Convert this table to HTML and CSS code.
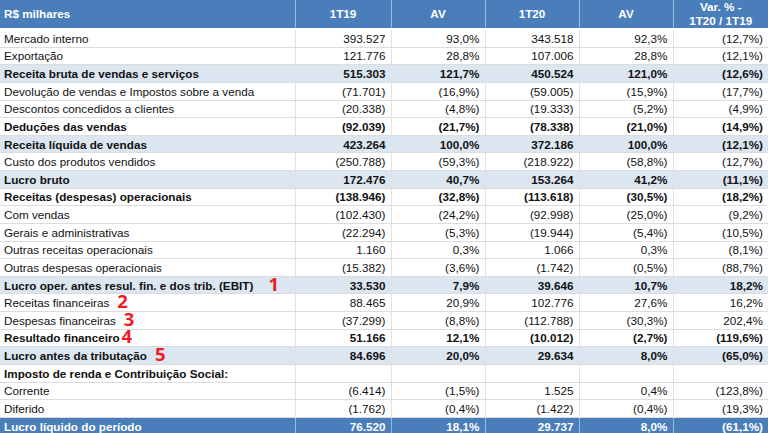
FILE: index.html
```html
<!DOCTYPE html>
<html lang="pt-BR">
<head>
<meta charset="utf-8">
<title>DRE</title>
<link rel="stylesheet" href="styles.css">
</head>
<body>
<table class="dre">
  <colgroup>
    <col class="c-label"><col class="c-n1"><col class="c-n"><col class="c-n"><col class="c-n"><col class="c-n5">
  </colgroup>
  <thead>
    <tr class="head">
      <th class="lbl">R$ milhares</th>
      <th>1T19</th>
      <th>AV</th>
      <th>1T20</th>
      <th>AV</th>
      <th>Var. % -<br>1T20 / 1T19</th>
    </tr>
  </thead>
  <tbody>
    <tr><td>Mercado interno</td><td>393.527</td><td>93,0%</td><td>343.518</td><td>92,3%</td><td>(12,7%)</td></tr>
    <tr><td>Exportação</td><td>121.776</td><td>28,8%</td><td>107.006</td><td>28,8%</td><td>(12,1%)</td></tr>
    <tr class="bold hl"><td>Receita bruta de vendas e serviços</td><td>515.303</td><td>121,7%</td><td>450.524</td><td>121,0%</td><td>(12,6%)</td></tr>
    <tr><td>Devolução de vendas e Impostos sobre a venda</td><td>(71.701)</td><td>(16,9%)</td><td>(59.005)</td><td>(15,9%)</td><td>(17,7%)</td></tr>
    <tr><td>Descontos concedidos a clientes</td><td>(20.338)</td><td>(4,8%)</td><td>(19.333)</td><td>(5,2%)</td><td>(4,9%)</td></tr>
    <tr class="bold"><td>Deduções das vendas</td><td>(92.039)</td><td>(21,7%)</td><td>(78.338)</td><td>(21,0%)</td><td>(14,9%)</td></tr>
    <tr class="bold hl"><td>Receita líquida de vendas</td><td>423.264</td><td>100,0%</td><td>372.186</td><td>100,0%</td><td>(12,1%)</td></tr>
    <tr><td>Custo dos produtos vendidos</td><td>(250.788)</td><td>(59,3%)</td><td>(218.922)</td><td>(58,8%)</td><td>(12,7%)</td></tr>
    <tr class="bold hl"><td>Lucro bruto</td><td>172.476</td><td>40,7%</td><td>153.264</td><td>41,2%</td><td>(11,1%)</td></tr>
    <tr class="bold"><td>Receitas (despesas) operacionais</td><td>(138.946)</td><td>(32,8%)</td><td>(113.618)</td><td>(30,5%)</td><td>(18,2%)</td></tr>
    <tr><td>Com vendas</td><td>(102.430)</td><td>(24,2%)</td><td>(92.998)</td><td>(25,0%)</td><td>(9,2%)</td></tr>
    <tr><td>Gerais e administrativas</td><td>(22.294)</td><td>(5,3%)</td><td>(19.944)</td><td>(5,4%)</td><td>(10,5%)</td></tr>
    <tr><td>Outras receitas operacionais</td><td>1.160</td><td>0,3%</td><td>1.066</td><td>0,3%</td><td>(8,1%)</td></tr>
    <tr><td>Outras despesas operacionais</td><td>(15.382)</td><td>(3,6%)</td><td>(1.742)</td><td>(0,5%)</td><td>(88,7%)</td></tr>
    <tr class="bold hl"><td>Lucro oper. antes resul. fin. e dos trib. (EBIT)<span class="mark m1">1</span></td><td>33.530</td><td>7,9%</td><td>39.646</td><td>10,7%</td><td>18,2%</td></tr>
    <tr><td>Receitas financeiras<span class="mark m2">2</span></td><td>88.465</td><td>20,9%</td><td>102.776</td><td>27,6%</td><td>16,2%</td></tr>
    <tr><td>Despesas financeiras<span class="mark m3">3</span></td><td>(37.299)</td><td>(8,8%)</td><td>(112.788)</td><td>(30,3%)</td><td>202,4%</td></tr>
    <tr class="bold"><td>Resultado financeiro<span class="mark m4">4</span></td><td>51.166</td><td>12,1%</td><td>(10.012)</td><td>(2,7%)</td><td>(119,6%)</td></tr>
    <tr class="bold hl"><td>Lucro antes da tributação<span class="mark m5">5</span></td><td>84.696</td><td>20,0%</td><td>29.634</td><td>8,0%</td><td>(65,0%)</td></tr>
    <tr class="bold"><td>Imposto de renda e Contribuição Social:</td><td></td><td></td><td></td><td></td><td></td></tr>
    <tr><td>Corrente</td><td>(6.414)</td><td>(1,5%)</td><td>1.525</td><td>0,4%</td><td>(123,8%)</td></tr>
    <tr><td>Diferido</td><td>(1.762)</td><td>(0,4%)</td><td>(1.422)</td><td>(0,4%)</td><td>(19,3%)</td></tr>
    <tr class="bold total"><td>Lucro líquido do período</td><td>76.520</td><td>18,1%</td><td>29.737</td><td>8,0%</td><td>(61,1%)</td></tr>
  </tbody>
</table>
</body>
</html>
```
FILE: styles.css
```css
html, body {
  margin: 0;
  padding: 0;
  background: #ffffff;
}
body {
  font-family: "Liberation Sans", Arial, sans-serif;
  color: #111111;
  overflow: hidden;
}
.dre {
  width: 768px;
  table-layout: fixed;
  border-collapse: collapse;
  font-size: 11.7px;
}
.c-label { width: 295px; }
.c-n1 { width: 96px; }
.c-n { width: 94px; }
.c-n5 { width: 95px; }

.head th {
  height: 26.5px;
  padding: 0 4px;
  background: #4a7ebb;
  color: #ffffff;
  font-weight: bold;
  font-size: 11.7px;
  line-height: 14px;
  text-align: center;
  border-left: 1px solid #9ab7dd;
  border-bottom: 2px solid #ffffff;
}
.head th:first-child { border-left: none; }
.head th.lbl { text-align: left; padding-left: 4px; }

.dre td {
  height: 16.64px;
  padding: 0 5px 0 4px;
  line-height: 15px;
  text-align: right;
  white-space: nowrap;
  border-bottom: 1px solid #dcdcdc;
  border-left: 1px solid #e2e2e2;
}
.dre td:first-child {
  text-align: left;
  border-left: none;
}
.bold td { font-weight: bold; }
.hl td { background: #dce6f1; }
.total td {
  background: #4a7ebb;
  color: #ffffff;
  border-left-color: #9ab7dd;
}

.mark {
  font-family: "Open Sans", "Liberation Sans", sans-serif;
  font-weight: bold;
  font-size: 18.5px;
  line-height: 12px;
  color: #ee1c24;
  vertical-align: -1px;
}
.m1 { margin-left: 15px; }
.m2 { margin-left: 8px; }
.m3 { margin-left: 8px; }
.m4 { margin-left: 2px; }
.m5 { margin-left: 8px; }
```
